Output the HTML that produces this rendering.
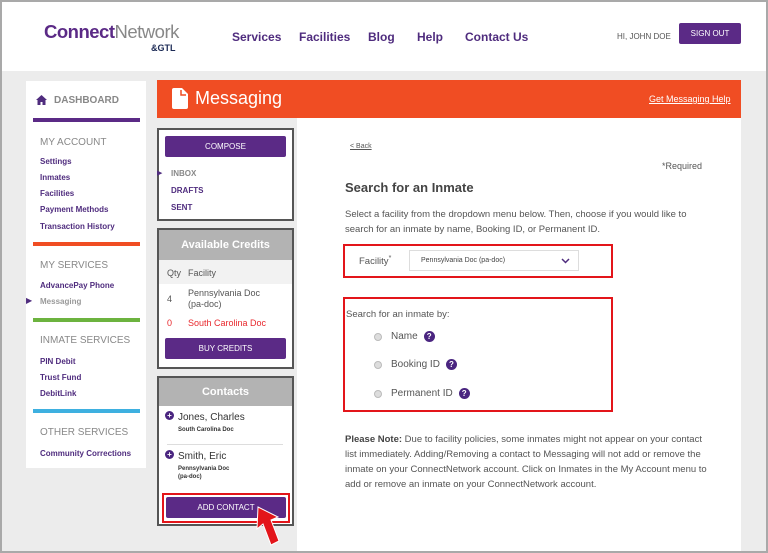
<!DOCTYPE html>
<html><head><style>
*{margin:0;padding:0;box-sizing:border-box}
body{width:768px;height:553px;overflow:hidden;font-family:"Liberation Sans",sans-serif;background:#ececec;position:relative}
.frame{position:absolute;left:0;top:0;width:768px;height:553px;border:2px solid #a9a9a9;pointer-events:none;z-index:10}
.hdr{position:absolute;left:0;top:0;width:768px;height:71px;background:#fff}
.a{position:absolute}
.nav{font-weight:bold;font-size:12px;color:#4f2c7e;top:30px}
.btn{background:#5b2a86;color:#fff;font-size:8px;text-align:center;border-radius:2px}
.sl{position:absolute;left:40px;font-size:8px;font-weight:bold;color:#4f2c7e}
.sh{position:absolute;left:40px;font-size:10px;color:#888}
.bar{position:absolute;left:33px;width:107px;height:4px}
.box{position:absolute;left:157px;width:137px;border:2px solid #555;background:#fff}
.gh{background:#b3b3b3;color:#fff;font-weight:bold;font-size:11px;text-align:center}
.t{font-size:9px;color:#555}
.q{display:inline-block;width:11px;height:11px;border-radius:50%;background:#4a2580;color:#fff;font-size:8px;font-weight:bold;text-align:center;line-height:11px;vertical-align:middle;margin-left:6px}
.rad{display:inline-block;width:8px;height:8px;border-radius:50%;background:#ddd;border:1px solid #bbb;vertical-align:middle;margin-right:9px}
.ro{position:absolute;left:374px;font-size:10px;color:#555}
.pl{display:inline-block;width:9px;height:9px;border-radius:50%;background:#4a2580;color:#fff;font-size:8px;font-weight:bold;text-align:center;line-height:9px;vertical-align:middle;margin-right:4px}
</style></head><body>
<div class="hdr"></div>
<div class="a" style="left:44px;top:21px;font-size:18.5px;color:#5b2a86;letter-spacing:-0.5px"><b>Connect</b><span style="color:#888;font-weight:normal">Network</span></div>
<div class="a" style="left:151px;top:43px;font-size:9px;font-weight:bold;color:#1c2a55">&amp;GTL</div>
<div class="a nav" style="left:232px">Services</div>
<div class="a nav" style="left:299px">Facilities</div>
<div class="a nav" style="left:368px">Blog</div>
<div class="a nav" style="left:417px">Help</div>
<div class="a nav" style="left:465px">Contact Us</div>
<div class="a" style="left:617px;top:32px;font-size:8px;color:#555">HI, JOHN DOE</div>
<div class="a btn" style="left:679px;top:23px;width:62px;height:21px;line-height:21px">SIGN OUT</div>

<div class="a" style="left:26px;top:81px;width:120px;height:387px;background:#fff"></div>
<svg class="a" style="left:36px;top:95px" width="11" height="10" viewBox="0 0 11 10"><path d="M5.5 0 L11 5 L9.5 5 L9.5 10 L6.5 10 L6.5 7 L4.5 7 L4.5 10 L1.5 10 L1.5 5 L0 5 Z" fill="#4f2c7e"/></svg>
<div class="a" style="left:54px;top:95px;font-size:10px;font-weight:bold;color:#888">DASHBOARD</div>
<div class="bar" style="top:118px;background:#5b2a86"></div>
<div class="sh" style="top:137px">MY ACCOUNT</div>
<div class="sl" style="top:157px">Settings</div>
<div class="sl" style="top:173px">Inmates</div>
<div class="sl" style="top:189px">Facilities</div>
<div class="sl" style="top:205px">Payment Methods</div>
<div class="sl" style="top:222px">Transaction History</div>
<div class="bar" style="top:242px;background:#f04d23"></div>
<div class="sh" style="top:260px">MY SERVICES</div>
<div class="sl" style="top:281px">AdvancePay Phone</div>
<div class="a" style="left:26px;top:296px;font-size:8px;color:#4f2c7e">&#9654;</div>
<div class="sl" style="top:297px;color:#999">Messaging</div>
<div class="bar" style="top:318px;background:#6cb33f"></div>
<div class="sh" style="top:335px">INMATE SERVICES</div>
<div class="sl" style="top:357px">PIN Debit</div>
<div class="sl" style="top:373px">Trust Fund</div>
<div class="sl" style="top:389px">DebitLink</div>
<div class="bar" style="top:409px;background:#3eb0e0"></div>
<div class="sh" style="top:427px">OTHER SERVICES</div>
<div class="sl" style="top:449px">Community Corrections</div>

<div class="a" style="left:157px;top:80px;width:584px;height:38px;background:#f04d23"></div>
<svg class="a" style="left:172px;top:88px" width="16" height="21" viewBox="0 0 16 21"><path d="M2 0 H10 L16 6 V19 Q16 21 14 21 H2 Q0 21 0 19 V2 Q0 0 2 0 Z" fill="#fff"/><path d="M9 2 V7 H14" fill="none" stroke="#f04d23" stroke-width="1.5"/></svg>
<div class="a" style="left:195px;top:88px;font-size:18px;color:#fff">Messaging</div>
<div class="a" style="left:649px;top:94px;font-size:9px;color:#fff;text-decoration:underline">Get Messaging Help</div>

<div class="a" style="left:297px;top:118px;width:444px;height:435px;background:#fff"></div>

<div class="box" style="top:128px;height:93px">
<div class="btn" style="margin:6px 6px 0;height:21px;line-height:21px">COMPOSE</div>
<div style="position:absolute;top:39px;left:12px;font-size:8px;color:#888;font-weight:bold">INBOX</div>
<div style="position:absolute;top:39px;left:-2px;font-size:7px;color:#4f2c7e">&#9654;</div>
<div style="position:absolute;top:56px;left:12px;font-size:8px;color:#4f2c7e;font-weight:bold">DRAFTS</div>
<div style="position:absolute;top:73px;left:12px;font-size:8px;color:#4f2c7e;font-weight:bold">SENT</div>
</div>

<div class="box" style="top:228px;height:141px">
<div class="gh" style="height:30px;line-height:30px">Available Credits</div>
<div style="background:#f2f2f2;height:24px" class="t"><span style="position:absolute;left:8px;top:38px">Qty</span><span style="position:absolute;left:29px;top:38px">Facility</span></div>
<div class="t" style="position:absolute;left:8px;top:64px">4</div>
<div class="t" style="position:absolute;left:29px;top:58px;line-height:11px">Pennsylvania Doc<br>(pa-doc)</div>
<div class="t" style="position:absolute;left:8px;top:88px;color:#e8282d">0</div>
<div class="t" style="position:absolute;left:29px;top:88px;color:#e8282d">South Carolina Doc</div>
<div class="btn" style="position:absolute;left:6px;top:108px;width:121px;height:21px;line-height:21px">BUY CREDITS</div>
</div>

<div class="box" style="top:376px;height:150px">
<div class="gh" style="height:28px;line-height:28px">Contacts</div>
<div class="a" style="left:6px;top:32px;line-height:12px"><span class="pl">+</span><span style="font-size:10px;color:#333">Jones, Charles</span></div>
<div class="a" style="left:19px;top:48px;font-size:6px;font-weight:bold;color:#333;line-height:8px">South Carolina Doc</div>
<div class="a" style="left:8px;top:66px;width:116px;border-top:1px solid #ddd"></div>
<div class="a" style="left:6px;top:71px;line-height:12px"><span class="pl">+</span><span style="font-size:10px;color:#333">Smith, Eric</span></div>
<div class="a" style="left:19px;top:87px;font-size:6px;font-weight:bold;color:#333;line-height:8px">Pennsylvania Doc<br>(pa-doc)</div>
<div class="a" style="left:3px;top:115px;width:128px;height:30px;border:2px solid #e3151a"></div>
<div class="btn a" style="left:7px;top:119px;width:120px;height:21px;line-height:21px">ADD CONTACT</div>
</div>
<svg class="a" style="left:252px;top:505px" width="30" height="42" viewBox="0 0 30 42"><polygon points="6,2 26,12 19,15 27,36 19,40 11,19 5,24" fill="#e3151a" stroke="#fff" stroke-width="1"/></svg>

<div class="a" style="left:350px;top:143px;font-size:7px;color:#555;text-decoration:underline">&lt; Back</div>
<div class="a" style="left:662px;top:161px;font-size:9px;color:#555">*Required</div>
<div class="a" style="left:345px;top:180px;font-size:13px;color:#444;font-weight:bold">Search for an Inmate</div>
<div class="a" style="left:345px;top:207px;font-size:9.5px;color:#555;line-height:15px;width:365px">Select a facility from the dropdown menu below. Then, choose if you would like to search for an inmate by name, Booking ID, or Permanent ID.</div>
<div class="a" style="left:343px;top:244px;width:270px;height:34px;border:2px solid #e3151a"></div>
<div class="a" style="left:359px;top:255px;font-size:9.5px;color:#555">Facility<sup style="font-size:7px">*</sup></div>
<div class="a" style="left:409px;top:250px;width:170px;height:21px;border:1px solid #ddd;font-size:7px;color:#444;line-height:19px;padding-left:11px">Pennsylvania Doc (pa-doc)<svg style="position:absolute;right:8px;top:7px" width="9" height="6" viewBox="0 0 9 6"><path d="M1 1 L4.5 4.5 L8 1" fill="none" stroke="#4f2c7e" stroke-width="1.5"/></svg></div>
<div class="a" style="left:343px;top:297px;width:270px;height:115px;border:2px solid #e3151a"></div>
<div class="a" style="left:346px;top:309px;font-size:9.5px;color:#555">Search for an inmate by:</div>
<div class="ro" style="top:331px"><span class="rad"></span>Name<span class="q">?</span></div>
<div class="ro" style="top:359px"><span class="rad"></span>Booking ID<span class="q">?</span></div>
<div class="ro" style="top:388px"><span class="rad"></span>Permanent ID<span class="q">?</span></div>
<div class="a" style="left:345px;top:432px;font-size:9.5px;color:#555;line-height:15px;width:362px"><b style="color:#444">Please Note:</b> Due to facility policies, some inmates might not appear on your contact list immediately. Adding/Removing a contact to Messaging will not add or remove the inmate on your ConnectNetwork account. Click on Inmates in the My Account menu to add or remove an inmate on your ConnectNetwork account.</div>
<div class="frame"></div>
</body></html>
